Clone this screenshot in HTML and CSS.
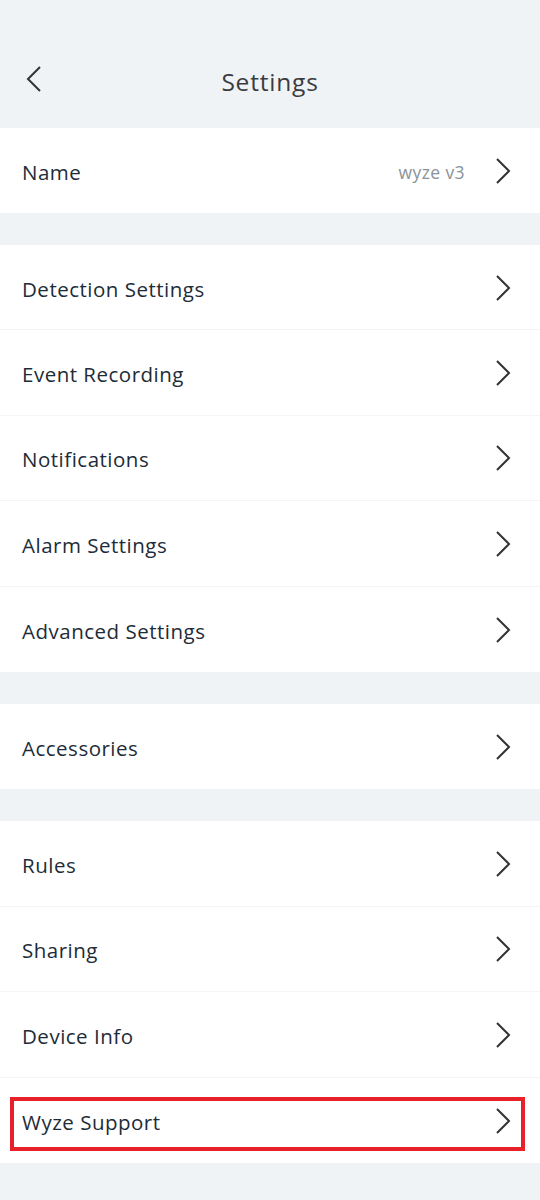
FILE: index.html
```html
<!DOCTYPE html>
<html lang="en">
<head>
<meta charset="utf-8">
<title>Settings</title>
<link rel="stylesheet" href="styles.css">
</head>
<body>
<div class="page">
  <header class="topbar">
    <svg class="back" width="16" height="26" viewBox="0 0 16 26"><polyline points="14,1 2,13 14,25" fill="none" stroke="#333" stroke-width="2"/></svg>
    <h1 class="title">Settings</h1>
  </header>

  <section class="group">
    <div class="row row-name"><span class="label">Name</span><span class="value">wyze v3</span><svg class="chev" width="16" height="26" viewBox="0 0 16 26"><polyline points="2,1 14,13 2,25" fill="none" stroke="#333" stroke-width="2"/></svg></div>
  </section>

  <section class="group">
    <div class="row"><span class="label">Detection Settings</span><svg class="chev" width="16" height="26" viewBox="0 0 16 26"><polyline points="2,1 14,13 2,25" fill="none" stroke="#333" stroke-width="2"/></svg></div>
    <div class="row"><span class="label">Event Recording</span><svg class="chev" width="16" height="26" viewBox="0 0 16 26"><polyline points="2,1 14,13 2,25" fill="none" stroke="#333" stroke-width="2"/></svg></div>
    <div class="row"><span class="label">Notifications</span><svg class="chev" width="16" height="26" viewBox="0 0 16 26"><polyline points="2,1 14,13 2,25" fill="none" stroke="#333" stroke-width="2"/></svg></div>
    <div class="row"><span class="label">Alarm Settings</span><svg class="chev" width="16" height="26" viewBox="0 0 16 26"><polyline points="2,1 14,13 2,25" fill="none" stroke="#333" stroke-width="2"/></svg></div>
    <div class="row"><span class="label">Advanced Settings</span><svg class="chev" width="16" height="26" viewBox="0 0 16 26"><polyline points="2,1 14,13 2,25" fill="none" stroke="#333" stroke-width="2"/></svg></div>
  </section>

  <section class="group">
    <div class="row"><span class="label">Accessories</span><svg class="chev" width="16" height="26" viewBox="0 0 16 26"><polyline points="2,1 14,13 2,25" fill="none" stroke="#333" stroke-width="2"/></svg></div>
  </section>

  <section class="group">
    <div class="row"><span class="label">Rules</span><svg class="chev" width="16" height="26" viewBox="0 0 16 26"><polyline points="2,1 14,13 2,25" fill="none" stroke="#333" stroke-width="2"/></svg></div>
    <div class="row"><span class="label">Sharing</span><svg class="chev" width="16" height="26" viewBox="0 0 16 26"><polyline points="2,1 14,13 2,25" fill="none" stroke="#333" stroke-width="2"/></svg></div>
    <div class="row"><span class="label">Device Info</span><svg class="chev" width="16" height="26" viewBox="0 0 16 26"><polyline points="2,1 14,13 2,25" fill="none" stroke="#333" stroke-width="2"/></svg></div>
    <div class="row highlight"><span class="label">Wyze Support</span><svg class="chev" width="16" height="26" viewBox="0 0 16 26"><polyline points="2,1 14,13 2,25" fill="none" stroke="#333" stroke-width="2"/></svg></div>
  </section>
</div>
</body>
</html>
```

FILE: styles.css
```css
*, *::before, *::after { box-sizing: border-box; }
html, body {
  margin: 0;
  padding: 0;
  background: #eff3f6;
}
body {
  font-family: "Open Sans", "Noto Sans", sans-serif;
  width: 540px;
  height: 1200px;
  overflow: hidden;
}
.page {
  display: flex;
  flex-direction: column;
  gap: 32px;
}
.topbar {
  height: 128px;
  display: flex;
  align-items: center;
  justify-content: center;
  position: relative;
  padding-top: 34px;
  margin-bottom: -32px;
}
.back {
  position: absolute;
  left: 26px;
  top: 66px;
}
.title {
  margin: 0;
  font-size: 24.5px;
  font-weight: 400;
  color: #3a3c3f;
  letter-spacing: 0.8px;
}
.group {
  background: #fff;
  display: flex;
  flex-direction: column;
}
.row {
  height: 85.4px;
  display: flex;
  align-items: center;
  padding: 3px 29px 0 22px;
  border-bottom: 1px solid #f2f4f5;
  position: relative;
}
.row:last-child { border-bottom: none; }
.row-name { height: 85px; }
.label {
  flex: 1;
  font-size: 20.5px;
  color: #1d2c38;
  letter-spacing: 0.5px;
}
.value {
  font-size: 17.5px;
  color: #8a9399;
  letter-spacing: 0.4px;
  margin-right: 30px;
}
.chev {
  flex: none;
  margin-top: -2px;
}
.highlight::after {
  content: "";
  position: absolute;
  left: 10px;
  right: 15px;
  top: 19px;
  height: 54px;
  border: 4px solid #e8202a;
}
```
